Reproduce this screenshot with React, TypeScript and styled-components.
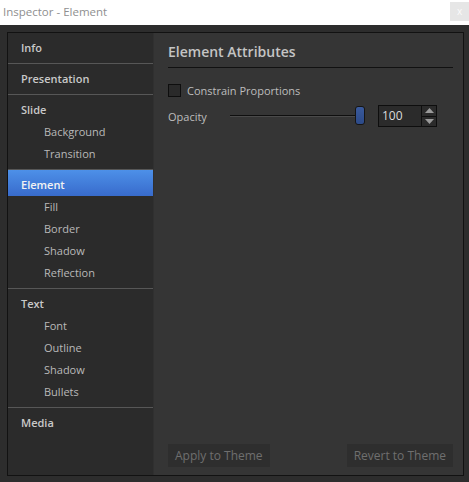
import React from "react";
import styled, { createGlobalStyle } from "styled-components";

const GlobalStyle = createGlobalStyle`
  html, body {
    margin: 0;
    padding: 0;
    background: #2d2d2d;
  }
  body {
    font-family: "Open Sans", "Noto Sans", sans-serif;
    font-size: 11px;
  }
`;

type NavItem = { label: string; children?: string[] };

const NAV: NavItem[] = [
  { label: "Info" },
  { label: "Presentation" },
  { label: "Slide", children: ["Background", "Transition"] },
  { label: "Element", children: ["Fill", "Border", "Shadow", "Reflection"] },
  { label: "Text", children: ["Font", "Outline", "Shadow", "Bullets"] },
  { label: "Media" },
];

export default function App() {
  const selected = "Element";
  const opacity = 100;

  return (
    <Window>
      <GlobalStyle />
      <TitleBar>
        <Title>Inspector - Element</Title>
        <CloseButton>x</CloseButton>
      </TitleBar>

      <Body>
        <Panel>
          <Sidebar>
            {NAV.map((item, i) => (
              <Group key={item.label} $last={i === NAV.length - 1}>
                <Head $active={item.label === selected}>{item.label}</Head>
                {item.children?.map((c) => (
                  <Sub key={c}>{c}</Sub>
                ))}
              </Group>
            ))}
          </Sidebar>

          <Content>
            <Heading>Element Attributes</Heading>

            <CheckRow>
              <Checkbox />
              <span>Constrain Proportions</span>
            </CheckRow>

            <SliderRow>
              <Label>Opacity</Label>
              <Track>
                <Thumb style={{ left: `${opacity}%` }} />
              </Track>
              <SpinBox>
                <SpinValue>{opacity}</SpinValue>
                <SpinButtons>
                  <SpinBtn>
                    <svg width="9" height="5" viewBox="0 0 9 5">
                      <path d="M0 5 L4.5 0 L9 5 Z" fill="#9a9a9a" />
                    </svg>
                  </SpinBtn>
                  <SpinBtn>
                    <svg width="9" height="5" viewBox="0 0 9 5">
                      <path d="M0 0 L4.5 5 L9 0 Z" fill="#9a9a9a" />
                    </svg>
                  </SpinBtn>
                </SpinButtons>
              </SpinBox>
            </SliderRow>

            <Footer>
              <ThemeButton disabled>Apply to Theme</ThemeButton>
              <ThemeButton disabled>Revert to Theme</ThemeButton>
            </Footer>
          </Content>
        </Panel>
      </Body>
    </Window>
  );
}

const Window = styled.div`
  width: 469px;
  height: 482px;
  display: flex;
  flex-direction: column;
  overflow: hidden;
`;

const TitleBar = styled.div`
  height: 25px;
  background: #ffffff;
  display: flex;
  align-items: flex-start;
  justify-content: space-between;
`;

const Title = styled.div`
  color: #8f8f8f;
  font-size: 11.5px;
  line-height: 24px;
  padding-left: 3px;
`;

const CloseButton = styled.div`
  width: 19px;
  height: 19px;
  margin-top: 2px;
  background: #e6e6e6;
  color: #fbfbfb;
  font-size: 10px;
  line-height: 18px;
  text-align: center;
`;

const Body = styled.div`
  flex: 1;
  background: #2d2d2d;
  padding: 7px 5px 6px 7px;
  display: flex;
  min-height: 0;
`;

const Panel = styled.div`
  flex: 1;
  display: flex;
  border: 1px solid #121212;
  box-shadow: inset -1px -1px 0 #4a4a4a;
  min-height: 0;
`;

const Sidebar = styled.div`
  width: 145px;
  background: #2b2b2b;
  border-right: 1px solid #303030;
  display: flex;
  flex-direction: column;
`;

const Group = styled.div<{ $last?: boolean }>`
  padding-bottom: 4px;
  border-bottom: ${(p) => (p.$last ? "none" : "1px solid #575757")};
`;

const Head = styled.div<{ $active?: boolean }>`
  height: 22px;
  padding-top: 4px;
  padding-left: 13px;
  line-height: 21px;
  font-weight: 600;
  color: ${(p) => (p.$active ? "#f2f2f2" : "#c9c9c9")};
  background: ${(p) =>
    p.$active ? "linear-gradient(#4d90e8, #386bcc)" : "transparent"};
`;

const Sub = styled.div`
  height: 22px;
  line-height: 22px;
  padding-left: 36px;
  color: #b9b9b9;
`;

const Content = styled.div`
  flex: 1;
  background: #353535;
  padding: 0 10px 8px 14px;
  display: flex;
  flex-direction: column;
  color: #bdbdbd;
`;

const Heading = styled.div`
  font-size: 14px;
  font-weight: 600;
  color: #c4c4c4;
  height: 34px;
  line-height: 37px;
  border-bottom: 1px solid #111111;
`;

const CheckRow = styled.div`
  display: flex;
  align-items: center;
  gap: 6px;
  margin-top: 15px;
  height: 14px;
`;

const Checkbox = styled.div`
  width: 11px;
  height: 11px;
  border: 1px solid #0e0e0e;
  background: #2a2a2a;
`;

const SliderRow = styled.div`
  display: flex;
  align-items: center;
  margin-top: 8px;
  height: 22px;
`;

const Label = styled.div`
  width: 62px;
`;

const Track = styled.div`
  position: relative;
  width: 127px;
  height: 1px;
  background: #0f0f0f;
  border-bottom: 1px solid #4a4a4a;
  margin-right: 21px;
`;

const Thumb = styled.div`
  position: absolute;
  top: -9px;
  margin-left: -2px;
  width: 8px;
  height: 17px;
  border: 1px solid #151515;
  border-radius: 3px;
  background: linear-gradient(#3a5a9c, #2c4a88);
`;

const SpinBox = styled.div`
  display: flex;
  width: 57px;
  height: 20px;
  border: 1px solid #0e0e0e;
  background: #2b2b2b;
`;

const SpinValue = styled.div`
  flex: 1;
  padding-left: 3px;
  line-height: 20px;
  font-size: 12px;
  color: #dcdcdc;
`;

const SpinButtons = styled.div`
  width: 14px;
  border-left: 1px solid #0e0e0e;
  display: flex;
  flex-direction: column;
`;

const SpinBtn = styled.div`
  flex: 1;
  display: flex;
  align-items: center;
  justify-content: center;
  & + & {
    border-top: 1px solid #0e0e0e;
  }
`;

const Footer = styled.div`
  margin-top: auto;
  display: flex;
  justify-content: space-between;
`;

const ThemeButton = styled.button`
  height: 23px;
  padding: 0 7px;
  border: none;
  background: #2e2e2e;
  color: #6f6f6f;
  font-family: inherit;
  font-size: 12px;
`;
